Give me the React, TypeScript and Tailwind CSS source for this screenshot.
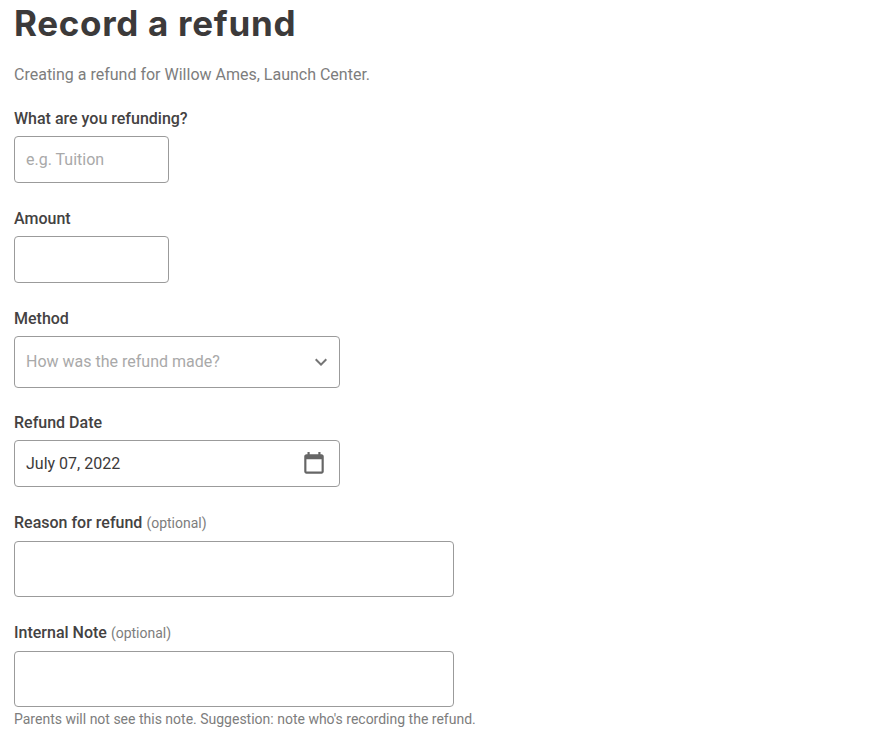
const inputBox =
  "block rounded border border-[#9b9b9b] bg-white px-[11px] text-base text-[#3c3a3a] outline-none placeholder:text-[#a9a9a9]";

function Label({ text, optional }: { text: string; optional?: boolean }) {
  return (
    <label className="block h-[24px] text-base leading-6 font-medium text-[#444242]">
      {text}
      {optional && <span className="ml-1 text-sm font-normal text-[#7d7d7d]">(optional)</span>}
    </label>
  );
}

function ChevronIcon() {
  return (
    <svg width="24" height="24" viewBox="0 0 24 24" fill="#757575">
      <path d="M16.59 8.59 12 13.17 7.41 8.59 6 10l6 6 6-6z" />
    </svg>
  );
}

function CalendarIcon() {
  return (
    <svg width="26" height="26" viewBox="0 0 24 24" fill="#666666">
      <path d="M19 3h-1V1h-2v2H8V1H6v2H5c-1.1 0-2 .9-2 2v14c0 1.1.9 2 2 2h14c1.1 0 2-.9 2-2V5c0-1.1-.9-2-2-2zm0 16H5V7.5h14v11.5z" />
    </svg>
  );
}

export default function App() {
  return (
    <main className="min-h-[748px] bg-white px-[14px] font-['Roboto',sans-serif] text-[#3c3a3a]">
      <h1 className="h-[46px] font-['Inter',sans-serif] text-[35px] leading-[46px] font-bold tracking-[0.7px] text-[#3c3a3a]">
        Record a refund
      </h1>

      <p className="mt-[17px] h-[24px] text-base leading-6 text-[#7d7d7d]">
        Creating a refund for Willow Ames, Launch Center.
      </p>

      <div className="mt-[20px]">
        <Label text="What are you refunding?" />
        <input placeholder="e.g. Tuition" className={`${inputBox} mt-[5px] h-[47px] w-[155px]`} />
      </div>

      <div className="mt-[24px]">
        <Label text="Amount" />
        <input className={`${inputBox} mt-[5px] h-[47px] w-[155px]`} />
      </div>

      <div className="mt-[24px]">
        <Label text="Method" />
        <div className="mt-[5px] flex h-[52px] w-[326px] items-center justify-between rounded border border-[#9b9b9b] pr-[6px] pl-[11px]">
          <span className="text-base text-[#a9a9a9]">How was the refund made?</span>
          <ChevronIcon />
        </div>
      </div>

      <div className="mt-[23px]">
        <Label text="Refund Date" />
        <div className="mt-[5px] flex h-[47px] w-[326px] items-center justify-between rounded border border-[#9b9b9b] pr-[12px] pl-[11px]">
          <span className="text-base text-[#3c3a3a]">July 07, 2022</span>
          <CalendarIcon />
        </div>
      </div>

      <div className="mt-[24px]">
        <Label text="Reason for refund" optional />
        <input className={`${inputBox} mt-[6px] h-[56px] w-[440px]`} />
      </div>

      <div className="mt-[24px]">
        <Label text="Internal Note" optional />
        <input className={`${inputBox} mt-[6px] h-[56px] w-[440px]`} />
        <p className="mt-[2px] text-sm leading-5 text-[#7d7d7d]">
          Parents will not see this note. Suggestion: note who's recording the refund.
        </p>
      </div>
    </main>
  );
}
